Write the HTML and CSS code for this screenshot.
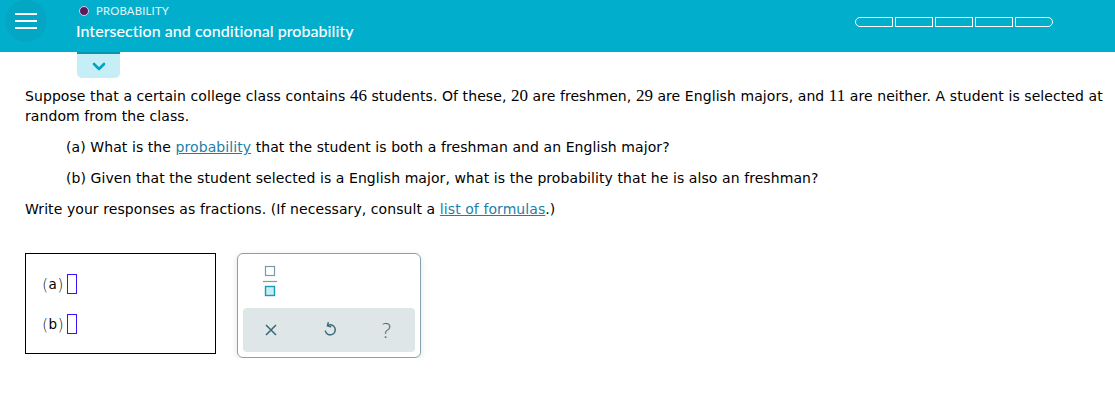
FILE: index.html
```html
<!DOCTYPE html>
<html>
<head>
<meta charset="utf-8">
<link rel="stylesheet" href="styles.css">
</head>
<body>
<header class="topbar">
  <div class="menu-btn">
    <svg width="24" height="18" viewBox="0 0 24 18"><path d="M1 2h22M1 9h22M1 16h22" stroke="#fff" stroke-width="2" fill="none"/></svg>
  </div>
  <div class="titles">
    <div class="topic"><span class="dot"></span>PROBABILITY</div>
    <div class="title">Intersection and conditional probability</div>
  </div>
  <div class="progress">
    <span class="seg first"></span><span class="seg"></span><span class="seg"></span><span class="seg"></span><span class="seg last"></span>
  </div>
</header>
<div class="tabrow">
  <div class="tab">
    <svg width="14" height="9" viewBox="0 0 14 9"><path d="M2 2l5 5 5-5" stroke="#00a3c4" stroke-width="2.6" fill="none" stroke-linecap="round" stroke-linejoin="round"/></svg>
  </div>
</div>
<main class="content">
  <p class="intro">Suppose that a certain college class contains <span class="num">46</span> students. Of these, <span class="num">20</span> are freshmen, <span class="num">29</span> are English majors, and <span class="num">11</span> are neither. A student is selected at random from the class.</p>
  <p class="q">(a) What is the <a href="#">probability</a> that the student is both a freshman and an English major?</p>
  <p class="q">(b) Given that the student selected is a English major, what is the probability that he is also an freshman?</p>
  <p class="note">Write your responses as fractions. (If necessary, consult a <a href="#">list of formulas</a>.)</p>
  <div class="answers">
    <div class="answer-box">
      <div class="ans-row"><span class="lbl"><span class="paren">(</span>a<span class="paren">)</span></span><span class="slot"></span></div>
      <div class="ans-row"><span class="lbl"><span class="paren">(</span>b<span class="paren">)</span></span><span class="slot"></span></div>
    </div>
    <div class="keypad">
      <div class="keys">
        <svg class="frac" width="16" height="34" viewBox="0 0 16 34"><rect x="3.5" y="1.5" width="9" height="9" fill="#fff" stroke="#7f99a2" stroke-width="1.2"/><path d="M1 16.5h14" stroke="#7f99a2" stroke-width="1.2"/><rect x="3.5" y="21.5" width="9" height="9" fill="#c6eef6" stroke="#1a9bb5" stroke-width="1.4"/></svg>
      </div>
      <div class="actions">
        <svg width="14" height="14" viewBox="0 0 14 14"><path d="M2 2l10 10M12 2L2 12" stroke="#3d6b79" stroke-width="1.6" fill="none"/></svg>
        <svg width="14" height="16" viewBox="0 0 14 16"><path d="M4.6 3.6 A5 5 0 1 1 2.3 8.5" stroke="#3d6b79" stroke-width="1.5" fill="none"/><path d="M5.2 0.8 L4.4 3.9 L7.6 4.8" stroke="#3d6b79" stroke-width="1.5" fill="none" stroke-linejoin="round" stroke-linecap="round"/></svg>
        <span class="help">?</span>
      </div>
    </div>
  </div>
</main>
</body>
</html>
```
FILE: styles.css
```css
html, body { margin: 0; padding: 0; background: #fff; }
body { font-family: "DejaVu Sans", Verdana, sans-serif; color: #000; }

.topbar {
  height: 52px;
  background: #01afcd;
  display: flex;
  align-items: flex-start;
  position: relative;
}
.menu-btn {
  width: 42px; height: 42px;
  margin: 0 0 0 5px;
  border-radius: 50%;
  background: #03a7c3;
  display: flex; align-items: center; justify-content: center;
}
.titles { margin-left: 29px; padding-top: 3px; }
.topic {
  font-family: Lato, "Open Sans", sans-serif;
  font-size: 11.3px;
  color: #e2f6fa;
  letter-spacing: 0.2px;
  display: flex; align-items: center;
  height: 15px;
}
.dot {
  width: 8px; height: 8px; border-radius: 50%;
  background: #5a1a5e;
  border: 1px solid #d9cde0;
  margin: 0 7px 0 3px;
}
.title {
  font-family: Lato, "Open Sans", sans-serif;
  font-size: 16px;
  font-weight: 500;
  color: #fff;
  margin-top: 3px;
  letter-spacing: 0.05px;
}
.progress {
  margin-left: auto;
  margin-right: 62px;
  margin-top: 17px;
  display: flex; gap: 2px;
}
.seg {
  width: 36px; height: 8px;
  border: 1px solid #fff;
}
.seg.first { border-radius: 5px 0 0 5px; }
.seg.last { border-radius: 0 5px 5px 0; }

.tabrow { padding-left: 77px; height: 26px; }
.tab {
  width: 43px; height: 24px;
  background: #c6eef6;
  border-top: 2px solid #0a93ad;
  border-radius: 0 0 5px 5px;
  display: flex; align-items: center; justify-content: center;
}

.content { padding: 0 3px 0 25px; font-size: 14px; letter-spacing: 0.08px; }
.content p { margin: 0; }
.intro { line-height: 20px; margin-top: 8px !important; }
.num { font-family: "Liberation Serif", "Times New Roman", serif; font-size: 17px; letter-spacing: 0; }
.q { padding-left: 41px; margin-top: 11px !important; line-height: 20px; }
.note { margin-top: 11px !important; line-height: 20px; }
a { color: #1b7fa8; text-decoration: underline; }

.answers { display: flex; gap: 21px; margin-top: 34px; align-items: flex-start; }
.answer-box {
  border: 1px solid #000;
  padding: 0 0 0 16px;
  box-sizing: border-box;
  width: 191px; height: 101px;
}
.ans-row { display: flex; align-items: center; height: 20px; margin-top: 20px; }
.lbl { font-size: 13.5px; letter-spacing: 0.3px; display: flex; align-items: center; }
.paren { font-size: 16px; font-weight: 300; color: #222; }
.slot {
  width: 8px; height: 18px;
  border: 1px solid #3a10ff;
  margin-left: 3px;
}
.keypad {
  width: 184px; height: 105px;
  box-sizing: border-box;
  border: 1px solid #85a3ad;
  border-radius: 6px;
  box-shadow: 0 2px 6px rgba(0,0,0,0.12);
  padding: 0 5px 5px 5px;
  display: flex; flex-direction: column;
}
.keys { height: 54px; padding-left: 19px; padding-top: 11px; box-sizing: border-box; }
.actions {
  flex: 1;
  background: #dfe6e8;
  border-radius: 4px;
  display: flex; align-items: center;
  justify-content: space-between;
  padding: 0 24px 0 21px;
}
.help { font-family: "Open Sans", sans-serif; font-size: 21px; color: #3d6b79; font-weight: 300; line-height: 1; }
```
